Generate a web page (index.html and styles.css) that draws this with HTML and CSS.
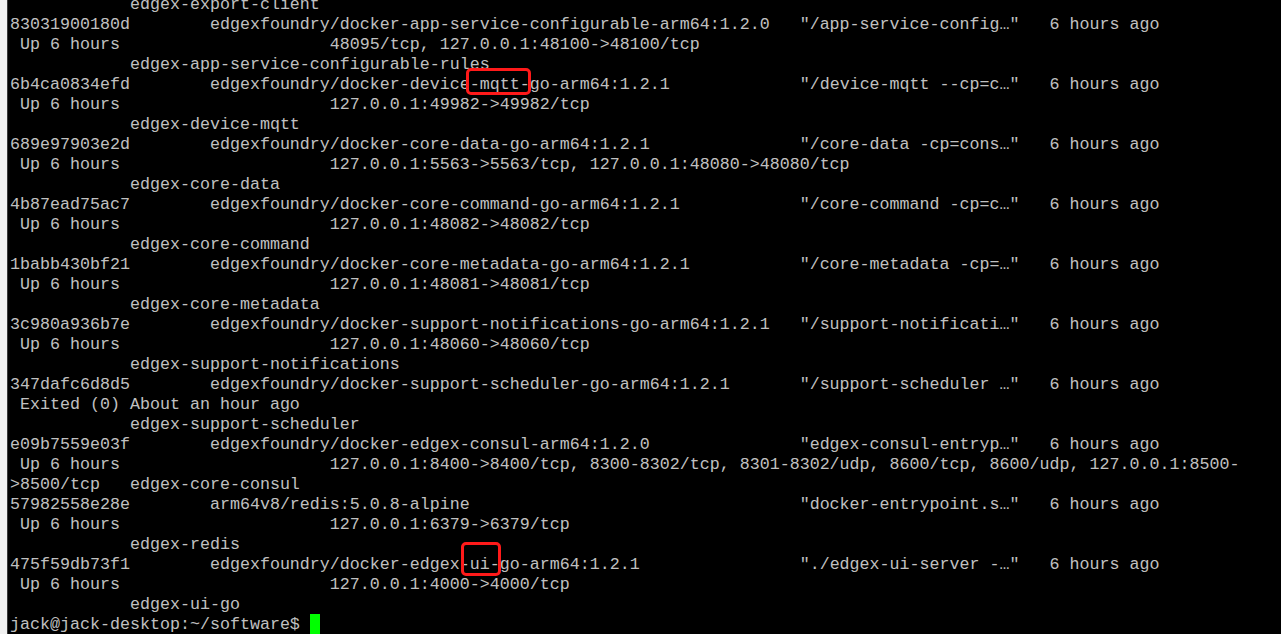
FILE: index.html
```html
<!DOCTYPE html>
<html lang="en">
<head>
<meta charset="utf-8">
<title>Terminal</title>
<link rel="stylesheet" href="styles.css">
</head>
<body>
<div class="window">
  <div class="frame"></div>
  <div class="terminal">
<pre class="output">            edgex-export-client
83031900180d        edgexfoundry/docker-app-service-configurable-arm64:1.2.0   "/app-service-config…"   6 hours ago
 Up 6 hours                     48095/tcp, 127.0.0.1:48100->48100/tcp
            edgex-app-service-configurable-rules
6b4ca0834efd        edgexfoundry/docker-device<span class="mark mark-mqtt">-mqtt-</span>go-arm64:1.2.1             "/device-mqtt --cp=c…"   6 hours ago
 Up 6 hours                     127.0.0.1:49982->49982/tcp
            edgex-device-mqtt
689e97903e2d        edgexfoundry/docker-core-data-go-arm64:1.2.1               "/core-data -cp=cons…"   6 hours ago
 Up 6 hours                     127.0.0.1:5563->5563/tcp, 127.0.0.1:48080->48080/tcp
            edgex-core-data
4b87ead75ac7        edgexfoundry/docker-core-command-go-arm64:1.2.1            "/core-command -cp=c…"   6 hours ago
 Up 6 hours                     127.0.0.1:48082->48082/tcp
            edgex-core-command
1babb430bf21        edgexfoundry/docker-core-metadata-go-arm64:1.2.1           "/core-metadata -cp=…"   6 hours ago
 Up 6 hours                     127.0.0.1:48081->48081/tcp
            edgex-core-metadata
3c980a936b7e        edgexfoundry/docker-support-notifications-go-arm64:1.2.1   "/support-notificati…"   6 hours ago
 Up 6 hours                     127.0.0.1:48060->48060/tcp
            edgex-support-notifications
347dafc6d8d5        edgexfoundry/docker-support-scheduler-go-arm64:1.2.1       "/support-scheduler …"   6 hours ago
 Exited (0) About an hour ago
            edgex-support-scheduler
e09b7559e03f        edgexfoundry/docker-edgex-consul-arm64:1.2.0               "edgex-consul-entryp…"   6 hours ago
 Up 6 hours                     127.0.0.1:8400->8400/tcp, 8300-8302/tcp, 8301-8302/udp, 8600/tcp, 8600/udp, 127.0.0.1:8500-
>8500/tcp   edgex-core-consul
57982558e28e        arm64v8/redis:5.0.8-alpine                                 "docker-entrypoint.s…"   6 hours ago
 Up 6 hours                     127.0.0.1:6379->6379/tcp
            edgex-redis
475f59db73f1        edgexfoundry/docker-edgex<span class="mark mark-ui">-ui-</span>go-arm64:1.2.1                "./edgex-ui-server -…"   6 hours ago
 Up 6 hours                     127.0.0.1:4000->4000/tcp
            edgex-ui-go
jack@jack-desktop:~/software$ <span class="cursor"> </span></pre>
  </div>
</div>
</body>
</html>
```

FILE: styles.css
```css
html, body {
  margin: 0;
  padding: 0;
  height: 100%;
  background: #000;
  overflow: hidden;
}

.window {
  display: flex;
  height: 634px;
  width: 1281px;
}

.frame {
  width: 8px;
  flex: none;
  background: #f0f0f0;
  border-right: 1px solid #3a3a3a;
  box-sizing: border-box;
}

.terminal {
  flex: 1;
  display: flex;
  flex-direction: column;
  justify-content: flex-end;
  overflow: hidden;
  padding-left: 2px;
  background: #000;
}

.output {
  margin: 0 0 -1px 0;
  font-family: "Liberation Mono", "Courier New", monospace;
  font-size: 16.667px;
  line-height: 20px;
  color: #c0c0c0;
  white-space: pre;
}

.mark {
  position: relative;
}

.mark::after {
  content: "";
  position: absolute;
  border: 3px solid #ff1a1a;
  border-radius: 5px;
  box-sizing: border-box;
}

.mark-mqtt::after {
  left: -4px;
  right: -1px;
  top: -7px;
  bottom: -1px;
}

.mark-ui::after {
  left: 1px;
  right: -1px;
  top: -13px;
  bottom: -2px;
}

.cursor {
  display: inline-block;
  width: 10px;
  height: 20px;
  margin-top: -1px;
  vertical-align: top;
  background: #00ff00;
}
```
